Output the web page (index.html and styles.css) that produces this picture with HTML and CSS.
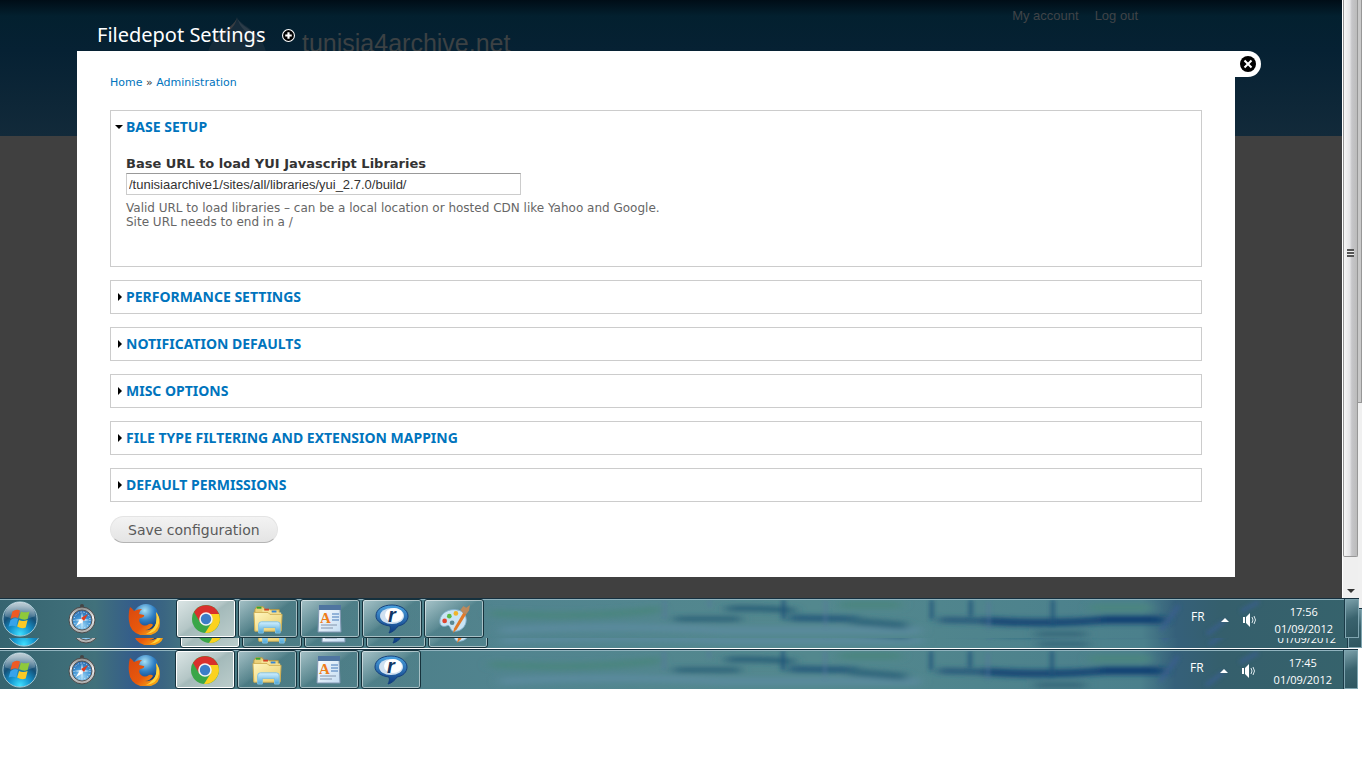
FILE: index.html
```html
<!DOCTYPE html>
<html lang="en">
<head>
    <meta charset="UTF-8">
    <meta name="viewport" content="width=device-width, initial-scale=1.0">
    <title>Filedepot Settings | tunisia4archive.net</title>
    <link rel="stylesheet" href="styles.css">
</head>
<body>
    <!-- Shared icons -->
    <svg class="defs" width="0" height="0" aria-hidden="true">
        <defs>
            <radialGradient id="gOrb" cx="50%" cy="95%" r="85%">
                <stop offset="0" stop-color="#3fe0ff"/><stop offset=".35" stop-color="#1596cf"/><stop offset=".7" stop-color="#155077"/><stop offset="1" stop-color="#4e7890"/>
            </radialGradient>
            <linearGradient id="gShine" x2="0" y2="1">
                <stop offset="0" stop-color="#fff" stop-opacity=".65"/><stop offset="1" stop-color="#fff" stop-opacity=".1"/>
            </linearGradient>
            <radialGradient id="gSafari" cx="50%" cy="80%" r="80%">
                <stop offset="0" stop-color="#9ed7f7"/><stop offset=".6" stop-color="#3b8fd0"/><stop offset="1" stop-color="#2a66ab"/>
            </radialGradient>
            <linearGradient id="gMetal" x2="0" y2="1">
                <stop offset="0" stop-color="#888"/><stop offset=".4" stop-color="#f4f4f4"/><stop offset="1" stop-color="#aaa"/>
            </linearGradient>
            <radialGradient id="gGlobe" cx="45%" cy="25%" r="75%">
                <stop offset="0" stop-color="#a6e0f5"/><stop offset=".5" stop-color="#2f7fc4"/><stop offset="1" stop-color="#123a78"/>
            </radialGradient>
            <linearGradient id="gFox" x2="1" y2="1">
                <stop offset="0" stop-color="#d9480f"/><stop offset=".55" stop-color="#e8590c"/><stop offset="1" stop-color="#fcc419"/>
            </linearGradient>
            <linearGradient id="gFolder" x2="1" y2="1">
                <stop offset="0" stop-color="#fff6c0"/><stop offset="1" stop-color="#e9cd6a"/>
            </linearGradient>
            <linearGradient id="gStand" x2="0" y2="1">
                <stop offset="0" stop-color="#d4f1ff"/><stop offset="1" stop-color="#4ba5d8"/>
            </linearGradient>
            <linearGradient id="gPage" x2="1" y2="1">
                <stop offset="0" stop-color="#fff"/><stop offset="1" stop-color="#c3dcf2"/>
            </linearGradient>
            <linearGradient id="gBubble" x2="0" y2="1">
                <stop offset="0" stop-color="#4ba3e0"/><stop offset="1" stop-color="#0d3a80"/>
            </linearGradient>
            <linearGradient id="gWall">
                <stop offset="0" stop-color="#366470"/><stop offset=".07" stop-color="#41717b"/><stop offset=".085" stop-color="#3a6683"/>
                <stop offset=".1" stop-color="#335c8c"/><stop offset=".12" stop-color="#3a6582"/><stop offset=".14" stop-color="#467780"/>
                <stop offset=".37" stop-color="#51848f"/><stop offset=".6" stop-color="#53888e"/><stop offset=".84" stop-color="#4b808c"/>
                <stop offset=".865" stop-color="#35607a"/><stop offset=".9" stop-color="#355f6c"/><stop offset="1" stop-color="#36636c"/>
            </linearGradient>
            <filter id="soft" x="-5%" y="-50%" width="110%" height="200%"><feGaussianBlur stdDeviation="6 3"/></filter>
            <filter id="thin" x="-5%" y="-50%" width="110%" height="200%"><feGaussianBlur stdDeviation="2"/></filter>
        </defs>

        <symbol id="wallpaper" viewBox="0 0 1358 40" preserveAspectRatio="none">
            <rect width="1358" height="40" fill="url(#gWall)"/>
            <g filter="url(#soft)" fill="none">
                <path d="M490 14q90 6 170-4M840 5h60M1090 8h60" stroke="#4b8580" stroke-width="8"/>
                <path d="M500 32q120-6 220 0h200" stroke="#5a8a9c" stroke-width="8"/>
                <path d="M674 20h66" stroke="#2d6379" stroke-width="6"/>
                <path d="M726 9q30-1 68 2" stroke="#2a6078" stroke-width="6"/>
                <path d="M788 19l70 1" stroke="#265b7b" stroke-width="7"/>
                <path d="M850 22l56 5" stroke="#33687d" stroke-width="8"/>
                <path d="M938 21l50 1" stroke="#28597a" stroke-width="6"/>
                <path d="M985 22q60 4 120-1h60" stroke="#164675" stroke-width="8"/>
                <path d="M1100 20h56" stroke="#0e3e71" stroke-width="7"/>
                <path d="M1035 36h50" stroke="#37687a" stroke-width="6"/>
            </g>
            <g filter="url(#thin)" stroke="#22547a" stroke-width="4" opacity=".8">
                <path d="M783 0v20M931 0v20M970 0v18M1052 0v26"/>
                <path d="M664 0v20M709 0v8M825 0v28M988 2v28" stroke="#5876a0" stroke-width="2"/>
                <path d="M1160 32l18-26M1206 36l18-14M1240 12l18-10" stroke="#3a5f92"/>
            </g>
        </symbol>

        <symbol id="orb" viewBox="0 0 40 40">
            <circle cx="20" cy="20" r="18" fill="url(#gOrb)" stroke="#a9cbd8"/>
            <path d="M4 17a16 15 0 0 1 32 0q-16 7-32 0z" fill="url(#gShine)"/>
            <path d="M12 12q4-3 8-1l-2 8q-4-2-8 1z" fill="#ee5a24"/>
            <path d="M21 12q4 2 9 0l-2 8q-4 2-9-1z" fill="#8fc93a"/>
            <path d="M10 21q4-3 8-1l-2 8q-4-2-8 0z" fill="#37a3ea"/>
            <path d="M19 21q4 2 9 0l-2 8q-4 2-9-1z" fill="#fbc926"/>
        </symbol>
        <symbol id="safari" viewBox="0 0 30 32">
            <rect x="13" y="1" width="4" height="4" rx="2" fill="#444"/>
            <circle cx="15" cy="17" r="13" fill="url(#gMetal)" stroke="#4a4a4a"/>
            <circle cx="15" cy="17" r="10" fill="url(#gSafari)" stroke="#555"/>
            <circle cx="15" cy="17" r="8" fill="none" stroke="#e4f3fc" stroke-dasharray="1 2"/>
            <path d="M15 9l1 7 7 1-7 1-1 7-1-7-7-1 7-1z" fill="#dceefa"/>
            <path d="M21 11l-4 7-3-3z" fill="#e03a1e"/>
            <path d="M9 23l4-7 3 3z" fill="#fff"/>
        </symbol>
        <symbol id="firefox" viewBox="0 0 32 32">
            <circle cx="18" cy="14" r="13" fill="url(#gGlobe)"/>
            <path d="M2 4q2 1 4 4 4-2 8-2-3 2-3 5l5 1q1 2-4 3-2 3 1 6 4 3 8 0 3-1 4 1-3 5-8 5 8 1 11-6 2-5 0-11 4 4 4 10 0 12-15 13Q2 31 1 18 0 10 2 4z" fill="url(#gFox)"/>
            <path d="M28 9q4 4 3 11-2 10-13 11 8-4 10-11 1-6 0-11z" fill="#ffd43b"/>
        </symbol>
        <symbol id="chrome" viewBox="0 0 30 30">
            <circle cx="15" cy="15" r="14" fill="#3aa648"/>
            <path d="M3 8a14 14 0 0 1 25 2H15L9 18z" fill="#d9302c"/>
            <path d="M28 10a14 14 0 0 1-14 19l7-11q1-4-2-8z" fill="#fbd21f"/>
            <circle cx="15" cy="15" r="6" fill="#3b7dc8" stroke="#f3f3f3" stroke-width="1.6"/>
        </symbol>
        <symbol id="explorer" viewBox="0 0 34 32">
            <path d="M3 6l2-3h7l2 3h15v22H3z" fill="#ecd27a" stroke="#b99a42"/>
            <path d="M11 6h8l2 3h10v19H11z" fill="#f7e59a"/>
            <path d="M5 4h5" stroke="#38a62c" stroke-width="2"/>
            <path d="M13 6h5" stroke="#d14227" stroke-width="2"/>
            <path d="M21 8h5" stroke="#3385d6" stroke-width="2"/>
            <path d="M2 9h15l2 2h13l-1 18H3z" fill="url(#gFolder)" stroke="#cfae52"/>
            <path d="M7 31v-9q0-3 3-3h17q3 0 3 3v9h-5v-6H12v6z" fill="url(#gStand)" stroke="#80bfe0"/>
        </symbol>
        <symbol id="wordpad" viewBox="0 0 26 30">
            <path d="M2 2h21l1 26H1z" fill="url(#gPage)" stroke="#8298b4"/>
            <path d="M2 1h22v5H2z" fill="#4f75a0"/>
            <path d="M15 10h7M15 13h7M15 16h7" stroke="#4478b8"/>
            <path d="M4 21h16M4 24h12" stroke="#8294ad"/>
            <text x="3" y="19" font-family="Liberation Serif, serif" font-size="15" font-weight="bold" fill="#ee7d1a">A</text>
        </symbol>
        <symbol id="realplayer" viewBox="0 0 34 30">
            <path d="M17 1c9 0 16 5 16 11 0 5-4 9-10 10-2 3-5 6-9 7 1-2 2-4 1-7C7 21 1 17 1 12 1 5 8 1 17 1z" fill="url(#gBubble)" stroke="#14417f"/>
            <ellipse cx="17" cy="12" rx="12" ry="8" fill="#cfe0f0"/>
            <ellipse cx="19" cy="11" rx="9" ry="7" fill="#fff"/>
            <text x="13" y="18" font-family="Liberation Sans, sans-serif" font-size="20" font-weight="bold" font-style="italic" fill="#123665">r</text>
        </symbol>
        <symbol id="paint" viewBox="0 0 34 32">
            <path d="M17 6C8 6 1 12 2 20c1 5 6 4 8 3 3-1 3 5 6 6 8 1 14-5 14-12S25 6 17 6z" fill="#c9e4f4" stroke="#86b3cf"/>
            <circle cx="15" cy="20" r="2.500" fill="#5b8994"/>
            <circle cx="7" cy="18" r="2.500" fill="#e0452f"/><circle cx="12" cy="13" r="2.500" fill="#58b947"/>
            <circle cx="19" cy="10" r="2.500" fill="#f0b429"/>
            <path d="M27 9l3 2-10 16-4 4 1-5z" fill="#e07a2a"/>
            <path d="M24 6l3-4 3 2 4-3-1 6-3 4-4-2z" fill="#bd8a5c"/>
        </symbol>
        <symbol id="speaker" viewBox="0 0 16 16">
            <path d="M1 5h2v6H1zM4 5l4-4v14l-4-4z" fill="#fff"/>
            <path d="M10 5q2 3 0 6M12 4q3 4 0 8" fill="none" stroke="#dce8ec"/>
        </symbol>
    </svg>

    <div class="screen">
        <div class="browser">
            <div class="viewport">
                <header class="site-header">
                    <svg class="site-logo" viewBox="0 0 62 72" aria-hidden="true">
                        <path d="M31 0c2 9 30 14 30 44a30 28 0 0 1-60 0C1 16 29 12 31 0z" fill="#162b3a"/>
                        <path d="M31 0c2 9 17 12 24 25-12-9-20-10-24-25z" fill="#2c3c48"/>
                        <path d="M31 0c-2 10-17 14-24 26 12-12 22-12 24-26z" fill="#3b3e42"/>
                    </svg>
                    <span class="site-name">tunisia4archive.net</span>
                    <nav class="user-menu">
                        <a href="#">My account</a>
                        <a href="#">Log out</a>
                    </nav>
                </header>

                <div class="overlay">
                    <div class="overlay-title">
                        <h1>Filedepot Settings</h1>
                        <button class="shortcut" type="button" aria-label="Add to shortcuts">
                            <svg viewBox="0 0 12 12"><circle cx="6" cy="6" r="5.500" fill="#000" stroke="#fff"/><path d="M6 3v6M3 6h6" stroke="#fff" stroke-width="2"/></svg>
                        </button>
                    </div>
                    <main class="overlay-content">
                        <button class="close" type="button" aria-label="Close overlay">
                            <svg viewBox="0 0 16 16"><circle cx="8" cy="8" r="8" fill="#000"/><path d="M4.500 4.500l7 7M11.500 4.500l-7 7" stroke="#fff" stroke-width="2"/></svg>
                        </button>
                        <div class="breadcrumb"><a href="#">Home</a> » <a href="#">Administration</a></div>
                        <form class="settings">
                            <fieldset class="open">
                                <legend><a href="#">Base setup</a></legend>
                                <div class="form-item">
                                    <label for="yui">Base URL to load YUI Javascript Libraries</label>
                                    <input id="yui" type="text" value="/tunisiaarchive1/sites/all/libraries/yui_2.7.0/build/">
                                    <p class="description">Valid URL to load libraries – can be a local location or hosted CDN like Yahoo and Google.<br>Site URL needs to end in a /</p>
                                </div>
                            </fieldset>
                            <fieldset><legend><a href="#">Performance settings</a></legend></fieldset>
                            <fieldset><legend><a href="#">Notification defaults</a></legend></fieldset>
                            <fieldset><legend><a href="#">Misc options</a></legend></fieldset>
                            <fieldset><legend><a href="#">File type filtering and extension mapping</a></legend></fieldset>
                            <fieldset><legend><a href="#">Default permissions</a></legend></fieldset>
                            <button class="save" type="submit">Save configuration</button>
                        </form>
                    </main>
                </div>
            </div>
            <div class="scrollbar">
                <div class="thumb"><span class="grip"></span></div>
                <span class="arrow-down"></span>
            </div>
            <div class="scroll-edge"><div class="edge-thumb"></div></div>
        </div>

        <div class="taskbars">
            <div class="taskbar behind">
                <svg class="wall"><use href="#wallpaper"/></svg>
                <div class="pinned">
                    <svg class="start"><use href="#orb"/></svg>
                    <svg class="pin"><use href="#safari"/></svg>
                    <svg class="pin"><use href="#firefox"/></svg>
                </div>
                <div class="tasks">
                    <button class="task active" type="button" aria-label="Chrome"><svg><use href="#chrome"/></svg></button>
                    <button class="task" type="button" aria-label="Explorer"><svg><use href="#explorer"/></svg></button>
                    <button class="task" type="button" aria-label="WordPad"><svg><use href="#wordpad"/></svg></button>
                    <button class="task" type="button" aria-label="RealPlayer"><svg><use href="#realplayer"/></svg></button>
                    <button class="task" type="button" aria-label="Paint"><svg><use href="#paint"/></svg></button>
                </div>
                <div class="tray">
                    <div class="clock"><span></span><span>01/09/2012</span></div>
                    <span class="show-desktop"></span>
                </div>
            </div>
            <div class="taskbar front">
                <svg class="wall"><use href="#wallpaper"/></svg>
                <div class="pinned">
                    <svg class="start"><use href="#orb"/></svg>
                    <svg class="pin"><use href="#safari"/></svg>
                    <svg class="pin"><use href="#firefox"/></svg>
                </div>
                <div class="tasks">
                    <button class="task active" type="button" aria-label="Chrome"><svg><use href="#chrome"/></svg></button>
                    <button class="task" type="button" aria-label="Explorer"><svg><use href="#explorer"/></svg></button>
                    <button class="task" type="button" aria-label="WordPad"><svg><use href="#wordpad"/></svg></button>
                    <button class="task" type="button" aria-label="RealPlayer"><svg><use href="#realplayer"/></svg></button>
                    <button class="task" type="button" aria-label="Paint"><svg><use href="#paint"/></svg></button>
                </div>
                <div class="tray">
                    <span class="lang">FR</span>
                    <span class="arrow-up"></span>
                    <svg class="speaker"><use href="#speaker"/></svg>
                    <div class="clock"><span>17:56</span><span>01/09/2012</span></div>
                    <span class="show-desktop"></span>
                </div>
            </div>
        </div>

        <div class="taskbar second">
            <svg class="wall"><use href="#wallpaper"/></svg>
            <div class="pinned">
                <svg class="start"><use href="#orb"/></svg>
                <svg class="pin"><use href="#safari"/></svg>
                <svg class="pin"><use href="#firefox"/></svg>
            </div>
            <div class="tasks">
                <button class="task active" type="button" aria-label="Chrome"><svg><use href="#chrome"/></svg></button>
                <button class="task" type="button" aria-label="Explorer"><svg><use href="#explorer"/></svg></button>
                <button class="task" type="button" aria-label="WordPad"><svg><use href="#wordpad"/></svg></button>
                <button class="task" type="button" aria-label="RealPlayer"><svg><use href="#realplayer"/></svg></button>
            </div>
            <div class="tray">
                <span class="lang">FR</span>
                <span class="arrow-up"></span>
                <svg class="speaker"><use href="#speaker"/></svg>
                <div class="clock"><span>17:45</span><span>01/09/2012</span></div>
                <span class="show-desktop"></span>
            </div>
        </div>
    </div>
</body>
</html>
```
FILE: styles.css
```css
* {
    box-sizing: border-box;
}
body {
    margin: 0;
    background-color: #fff;
    font-family: "Lucida Grande", "DejaVu Sans", sans-serif;
    font-size: 11px;
    color: #333;
}
button {
    border: 0;
    padding: 0;
    background: none;
}
a {
    color: #0074bd;
    text-decoration: none;
}
.defs {
    position: absolute;
    visibility: hidden;
}
.screen {
    margin-right: 4px;
}

/* Browser window */
.browser {
    display: flex;
}
.viewport {
    flex: 1;
    position: relative;
    background-color: #404040;
}
.site-header {
    position: absolute;
    top: 0;
    left: 0;
    right: 0;
    height: 136px;
    display: flex;
    align-items: flex-start;
    padding: 0 204px 0 206px;
    background: linear-gradient(#000d17 0, #03202f 16px, #062133 50px, #122a3a 100%);
    font-family: "Liberation Sans", Arial, sans-serif;
}
.site-logo {
    width: 62px;
    height: 72px;
    margin-top: 17px;
}
.site-name {
    margin: 29px auto 0 34px;
    font-size: 25px;
    line-height: 28px;
    color: #3c4144;
}
.user-menu {
    display: flex;
    gap: 16px;
    margin-top: 8px;
    font-size: 13px;
    line-height: 16px;
}
.user-menu a {
    color: #404448;
}

/* Overlay */
.overlay {
    position: relative;
    padding: 0 107px 21px 77px;
}
.overlay-title {
    display: flex;
    align-items: center;
    gap: 17px;
    padding: 20px 0 1px 20px;
}
.overlay-title h1 {
    margin: 0;
    font-family: "Lucida Grande", "Noto Sans", sans-serif;
    font-size: 20px;
    font-weight: normal;
    line-height: 30px;
    color: #fff;
}
.shortcut svg {
    display: block;
    width: 13px;
    height: 13px;
}
.overlay-content {
    position: relative;
    padding: 25px 33px 34px;
    background-color: #fff;
}
.close {
    position: absolute;
    top: 0;
    left: 100%;
    width: 26px;
    height: 26px;
    padding: 5px;
    border-radius: 0 13px 13px 0;
    background-color: #fff;
}
.close svg {
    display: block;
    width: 16px;
    height: 16px;
}
.breadcrumb {
    margin-bottom: 20px;
    line-height: 14px;
}

/* Settings form */
fieldset {
    min-width: 0;
    margin: 0 0 13px;
    padding: 8px 15px;
    border: 1px solid #ccc;
}
legend {
    float: left;
    width: 100%;
    padding: 0;
    font-family: "Lucida Grande", "Noto Sans", sans-serif;
    font-size: 14px;
    font-weight: bold;
    line-height: 16px;
    text-transform: uppercase;
}
legend::before {
    content: "";
    float: left;
    margin: 4px 4px 0 -8px;
    border: 4px solid transparent;
    border-left: 4px solid #000;
    border-right: 0;
}
.open legend::before {
    margin: 6px 3px 0 -11px;
    border: 4px solid transparent;
    border-top: 4px solid #000;
    border-bottom: 0;
}
.form-item {
    clear: both;
    padding: 20px 0 29px;
}
.form-item label {
    display: block;
    font-size: 13px;
    font-weight: bold;
    line-height: 18px;
}
.form-item input {
    display: block;
    width: 395px;
    height: 22px;
    padding: 2px;
    border: 1px solid #ccc;
    border-top-color: #999;
    font-family: "Liberation Sans", Arial, sans-serif;
    font-size: 13px;
    color: #333;
}
.description {
    margin: 6px 0 0;
    font-size: 12px;
    line-height: 14px;
    color: #666;
}
.save {
    display: block;
    height: 27px;
    margin-top: 14px;
    padding: 0 17px;
    border: 1px solid #e4e4e4;
    border-bottom-color: #b4b4b4;
    border-radius: 14px;
    background: linear-gradient(#f3f3f3, #e4e4e4);
    font-family: "DejaVu Sans", Verdana, sans-serif;
    font-size: 14px;
    color: #5a5a5a;
}

/* Scrollbars */
.scrollbar {
    width: 16px;
    padding-bottom: 5px;
    display: flex;
    flex-direction: column;
    align-items: center;
    justify-content: space-between;
    border-left: 1px solid #fff;
    background-color: #efefef;
}
.thumb {
    width: 100%;
    height: 94%;
    display: flex;
    align-items: center;
    justify-content: center;
    border: 1px solid #979797;
    border-top: 0;
    border-radius: 0 0 2px 2px;
    background: linear-gradient(90deg, #f6f6f6, #e4e4e6 45%, #c6c6c9 60%, #bbb);
}
.grip {
    width: 7px;
    height: 8px;
    margin-bottom: 50px;
    background: repeating-linear-gradient(#555 0, #555 2px, #eee 2px, #eee 3px);
}
.arrow-down {
    border: 4px solid transparent;
    border-top-color: #333;
    border-bottom: 0;
}
.scroll-edge {
    width: 4px;
    background-color: #f0f0f0;
}
.edge-thumb {
    height: 403px;
    border: solid #979797;
    border-width: 0 1px 1px 0;
    background-color: #c8c8c8;
}

/* Taskbars */
.taskbars {
    display: grid;
    background: linear-gradient(#f0f0f0, #f0f0f0) right top / 4px 100% no-repeat;
}
.taskbar {
    position: relative;
    grid-area: 1 / 1;
    height: 40px;
    display: flex;
    border-top: 1px solid #15303f;
    overflow: hidden;
}
.behind {
    margin-top: 10px;
    padding-left: 4px;
}
.front {
    align-self: start;
    margin-right: 3px;
}
.second {
    margin: 1px 4px 0 0;
}
.wall {
    position: absolute;
    top: 0;
    left: 0;
    width: 100%;
    height: 100%;
    border-top: 1px solid #8fb2bd;
}
.pinned,
.tasks,
.tray {
    position: relative;
    display: flex;
}
.pinned {
    width: 176px;
    align-items: center;
}
.second .pinned {
    width: 175px;
}
.start {
    width: 40px;
    height: 38px;
}
.pin {
    width: 32px;
    height: 32px;
    margin-left: 26px;
}
.pin + .pin {
    margin-left: 30px;
}
.tasks {
    gap: 2px;
    flex: 1;
}
.task {
    width: 60px;
    height: 39px;
    border: 1px solid #16323c;
    border-radius: 3px;
    box-shadow: inset 0 0 0 1px rgba(255, 255, 255, 0.5);
    background: linear-gradient(145deg, rgba(215, 232, 235, 0.65), rgba(130, 165, 170, 0.3) 45%, rgba(90, 130, 135, 0.15) 50%);
}
.task.active {
    box-shadow: inset 0 0 0 1px #fff;
    background: linear-gradient(145deg, #dce6e6, #b4c6c6 45%, #a4baba 50%, #bccdcc);
}
.task svg {
    display: block;
    width: 34px;
    height: 30px;
    margin: 0 auto;
}
.tray {
    align-items: center;
    color: #fff;
    font-family: "Open Sans", "Segoe UI", sans-serif;
    font-size: 11px;
    line-height: 17px;
}
.lang {
    margin-bottom: 5px;
    font-size: 12px;
}
.arrow-up {
    margin: 3px 13px 0 16px;
    border: 4px solid transparent;
    border-bottom-color: #fff;
    border-top: 0;
}
.speaker {
    width: 16px;
    height: 16px;
    margin-top: 2px;
}
.clock {
    display: flex;
    flex-direction: column;
    align-items: center;
    margin: 2px 12px 0 17px;
}
.clock span {
    min-height: 17px;
}
.show-desktop {
    align-self: stretch;
    width: 14px;
    border: 1px solid #7fa5b0;
    outline: 1px solid #1b3b48;
    background: linear-gradient(160deg, #7ba0aa, #3a636e 50%, #2f5660);
}
```
